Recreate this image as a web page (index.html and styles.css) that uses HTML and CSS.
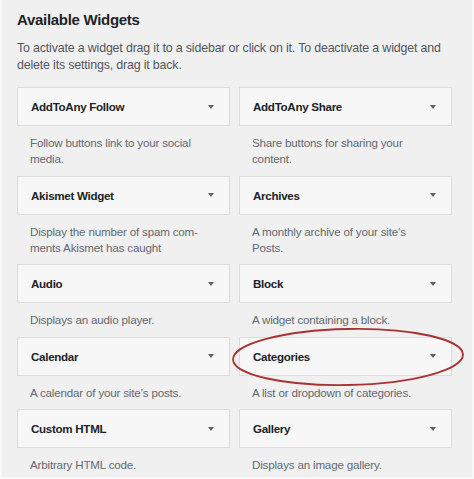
FILE: index.html
```html
<!DOCTYPE html>
<html lang="en">
<head>
<meta charset="utf-8">
<title>Available Widgets</title>
<link rel="stylesheet" href="styles.css">
</head>
<body>
<div class="panel">
  <h2 class="title">Available Widgets</h2>
  <p class="intro">To activate a widget drag it to a sidebar or click on it. To deactivate a widget and delete its settings, drag it back.</p>
  <div class="grid">
    <div class="widget">
      <div class="bar"><span class="name">AddToAny Follow</span><span class="arrow"></span></div>
      <p class="desc">Follow buttons link to your social media.</p>
    </div>
    <div class="widget">
      <div class="bar"><span class="name">AddToAny Share</span><span class="arrow"></span></div>
      <p class="desc">Share buttons for sharing your content.</p>
    </div>
    <div class="widget">
      <div class="bar"><span class="name">Akismet Widget</span><span class="arrow"></span></div>
      <p class="desc">Display the number of spam com&shy;ments Akismet has caught</p>
    </div>
    <div class="widget">
      <div class="bar"><span class="name">Archives</span><span class="arrow"></span></div>
      <p class="desc">A monthly archive of your site’s Posts.</p>
    </div>
    <div class="widget">
      <div class="bar"><span class="name">Audio</span><span class="arrow"></span></div>
      <p class="desc">Displays an audio player.</p>
    </div>
    <div class="widget">
      <div class="bar"><span class="name">Block</span><span class="arrow"></span></div>
      <p class="desc">A widget containing a block.</p>
    </div>
    <div class="widget">
      <div class="bar"><span class="name">Calendar</span><span class="arrow"></span></div>
      <p class="desc">A calendar of your site’s posts.</p>
    </div>
    <div class="widget highlighted">
      <div class="bar"><span class="name">Categories</span><span class="arrow"></span></div>
      <p class="desc">A list or dropdown of categories.</p>
      <svg class="circle" width="234" height="60" viewBox="0 0 234 60" aria-hidden="true">
        <ellipse cx="117" cy="30" rx="115" ry="28" fill="none" stroke="#a93333" stroke-width="1.8" transform="rotate(-1.2 117 30)"/>
      </svg>
    </div>
    <div class="widget">
      <div class="bar"><span class="name">Custom HTML</span><span class="arrow"></span></div>
      <p class="desc">Arbitrary HTML code.</p>
    </div>
    <div class="widget">
      <div class="bar"><span class="name">Gallery</span><span class="arrow"></span></div>
      <p class="desc">Displays an image gallery.</p>
    </div>
  </div>
</div>
</body>
</html>
```
FILE: styles.css
```css
html, body {
  margin: 0;
  padding: 0;
}
body {
  background: #f8f8f8;
  font-family: "Liberation Sans", Arial, sans-serif;
  height: 479px;
  overflow: hidden;
}
.panel {
  background: #f0f0f1;
  margin: 0 2px 0 2px;
  height: 477px;
  padding: 10px 0 0 15px;
  box-sizing: border-box;
}
.title {
  margin: 0;
  font-size: 15px;
  letter-spacing: -0.3px;
  line-height: 20px;
  font-weight: bold;
  color: #1d2327;
}
.intro {
  margin: 9.5px 0 0 0;
  width: 440px;
  font-size: 12.4px;
  letter-spacing: -0.16px;
  line-height: 17px;
  color: #50575e;
}
.grid {
  margin-top: 13.5px;
  display: grid;
  grid-template-columns: 213px 213px;
  column-gap: 9px;
  row-gap: 8.5px;
}
.widget {
  position: relative;
}
.bar {
  height: 39px;
  box-sizing: border-box;
  border: 1px solid #dcdcde;
  background: #f7f7f7;
  display: flex;
  align-items: center;
  justify-content: space-between;
  padding: 0 15px 0 13px;
}
.name {
  font-size: 11.6px;
  letter-spacing: -0.3px;
  font-weight: bold;
  color: #1d2327;
}
.arrow {
  width: 0;
  height: 0;
  border-left: 3px solid transparent;
  border-right: 3px solid transparent;
  border-top: 4.5px solid #5c6167;
}
.desc {
  margin: 0;
  padding: 9px 13px 0 13px;
  font-size: 11.6px;
  letter-spacing: -0.18px;
  line-height: 16px;
  color: #646970;
  hyphens: manual;
  max-width: 176px;
}
.circle {
  position: absolute;
  left: -8px;
  top: -10px;
  pointer-events: none;
}
```
